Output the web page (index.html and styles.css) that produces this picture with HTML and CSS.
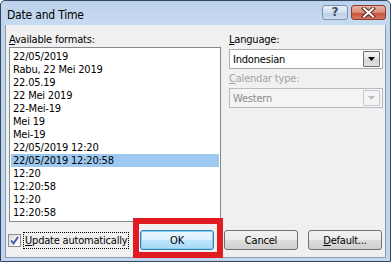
FILE: index.html
```html
<!DOCTYPE html>
<html>
<head>
<meta charset="utf-8">
<link rel="stylesheet" href="styles.css">
</head>
<body>
<div class="window">
  <div class="titlebar">
    <span class="title">Date and Time</span>
    <div class="caption-btns">
      <span class="cbtn help">?</span>
      <span class="cbtn close">
        <svg width="15" height="11" viewBox="0 0 15 11">
          <path d="M3 1.5 L12 9.5 M12 1.5 L3 9.5" stroke="#5a2a20" stroke-width="4" stroke-linecap="square"/>
          <path d="M3 1.5 L12 9.5 M12 1.5 L3 9.5" stroke="#ffffff" stroke-width="2" stroke-linecap="square"/>
        </svg>
      </span>
    </div>
  </div>
  <div class="client">
    <div class="main">
      <div class="col-left">
        <div class="label"><u>A</u>vailable formats:</div>
        <div class="listbox">
          <div class="item">22/05/2019</div>
          <div class="item">Rabu, 22 Mei 2019</div>
          <div class="item">22.05.19</div>
          <div class="item">22 Mei 2019</div>
          <div class="item">22-Mei-19</div>
          <div class="item">Mei 19</div>
          <div class="item">Mei-19</div>
          <div class="item">22/05/2019 12:20</div>
          <div class="item selected">22/05/2019 12:20:58</div>
          <div class="item">12:20</div>
          <div class="item">12:20:58</div>
          <div class="item">12:20</div>
          <div class="item">12:20:58</div>
        </div>
      </div>
      <div class="col-right">
        <div class="label"><u>L</u>anguage:</div>
        <div class="combo">
          <span class="combo-text">Indonesian</span>
          <span class="drop">
            <svg width="7" height="4" viewBox="0 0 7 4"><path d="M0 0 H7 L3.5 4 Z" fill="#000"/></svg>
          </span>
        </div>
        <div class="label label-cal disabled"><u>C</u>alendar type:</div>
        <div class="combo combo-disabled">
          <span class="combo-text">Western</span>
          <span class="drop">
            <svg width="7" height="4" viewBox="0 0 7 4"><path d="M0 0 H7 L3.5 4 Z" fill="#b8bcc2"/></svg>
          </span>
        </div>
      </div>
    </div>
    <div class="footer">
      <div class="check">
        <span class="box">
          <svg width="9" height="9" viewBox="0 0 9 9"><path d="M1 4.5 L3.5 7.5 L8 1" fill="none" stroke="#3d58a0" stroke-width="1.8"/></svg>
        </span>
        <span class="focus"><u>U</u>pdate automatically</span>
      </div>
      <span class="btn btn-ok">OK</span>
      <span class="btn">Cancel</span>
      <span class="btn"><u>D</u>efault...</span>
    </div>
  </div>
</div>
</body>
</html>
```

FILE: styles.css
```css
html, body {
  margin: 0;
  padding: 0;
  background: #ffffff;
}

body {
  font-family: "DejaVu Sans Condensed", "DejaVu Sans", "Liberation Sans", sans-serif;
  font-size: 11px;
  letter-spacing: -0.2px;
  color: #000;
}

u {
  text-decoration: underline;
  text-underline-offset: 1px;
}

.window {
  width: 391px;
  height: 262px;
  box-sizing: border-box;
  border: 1px solid #34465c;
  border-radius: 5px 5px 0 0;
  background: #c1d5ee;
  padding: 0 4px 3px 4px;
  display: flex;
  flex-direction: column;
}

.titlebar {
  height: 24px;
  display: flex;
  align-items: flex-start;
  justify-content: space-between;
  background: linear-gradient(#bcd1eb, #c8dbf1);
}

.title {
  margin: 7px 0 0 2px;
  font-size: 12px;
  line-height: 14px;
  color: #000;
}

.caption-btns {
  display: flex;
  gap: 3px;
  margin-top: 4px;
}

.cbtn {
  height: 15px;
  box-sizing: border-box;
  border-radius: 3px;
  display: flex;
  align-items: center;
  justify-content: center;
}

.help {
  width: 26px;
  border: 1px solid #7d92ae;
  background: linear-gradient(#e8eff8, #d2dfee 50%, #bccfe5 51%, #cddcee);
  color: #3a4c66;
  font-family: "DejaVu Sans", sans-serif;
  font-weight: bold;
  font-size: 12px;
  line-height: 13px;
}

.close {
  width: 35px;
  border: 1px solid #8c3a2b;
  background: linear-gradient(#eab2a3, #d98a77 50%, #c8513b 51%, #d8765e);
}

.client {
  flex: 1;
  background: #f0f0f0;
  border: 1px solid #8a9cb4;
  border-top: none;
  display: flex;
  flex-direction: column;
}

.main {
  display: flex;
  gap: 8px;
  padding: 8px 2px 0 3px;
}

.col-left {
  display: flex;
  flex-direction: column;
}

.label {
  height: 14px;
  line-height: 14px;
}

.listbox {
  width: 212px;
  height: 175px;
  box-sizing: border-box;
  border: 1px solid #828790;
  background: #fff;
  padding: 2px 1px 1px 1px;
}

.item {
  height: 13px;
  line-height: 13px;
  padding-left: 2px;
  white-space: nowrap;
}

.selected {
  background: #9dc9f0;
}

.col-right {
  display: flex;
  flex-direction: column;
  width: 154px;
}

.combo {
  margin-top: 2px;
  height: 20px;
  box-sizing: border-box;
  border: 1px solid #abadb3;
  background: #fff;
  display: flex;
  align-items: center;
  justify-content: space-between;
  padding: 0 2px 0 3px;
}

.drop {
  width: 17px;
  height: 16px;
  box-sizing: border-box;
  border: 1px solid #6f6f6f;
  border-radius: 1px;
  background: linear-gradient(#f4f4f4, #e6e6e6 50%, #d6d6d6 51%, #e0e0e0);
  display: flex;
  align-items: center;
  justify-content: center;
}

.label-cal {
  margin-top: 3px;
}

.disabled {
  color: #a3a3a3;
}

.combo-disabled {
  border-color: #b6bcc4;
  background: #f4f4f4;
  color: #8a8a8a;
}

.combo-disabled .drop {
  border-color: #c4c9d0;
  background: #f4f4f4;
}

.footer {
  margin-top: auto;
  display: flex;
  align-items: center;
  padding: 0 3px 7px 2px;
}

.check {
  display: flex;
  align-items: center;
  gap: 2px;
}

.box {
  width: 13px;
  height: 13px;
  box-sizing: border-box;
  border: 1px solid #8f8f8f;
  background: linear-gradient(135deg, #dcdcdc, #ffffff);
  display: flex;
  align-items: center;
  justify-content: center;
}

.focus {
  border: 1px dotted #000;
  padding: 1px;
  line-height: 13px;
}

.btn {
  width: 74px;
  height: 20px;
  box-sizing: border-box;
  border: 1px solid #707070;
  border-radius: 3px;
  background: linear-gradient(#f2f2f2, #ebebeb 50%, #dddddd 51%, #cfcfcf);
  display: flex;
  align-items: center;
  justify-content: center;
  margin-left: 10px;
}

.btn-ok {
  margin-left: auto;
  position: relative;
  border-color: #3c7fb1;
  background: linear-gradient(#eaf6fd, #d9f0fc 50%, #bee6fd 51%, #a7d9f5);
  box-shadow: inset 0 0 0 1px #7ed0f4;
}

.btn-ok::after {
  content: "";
  position: absolute;
  left: -8px;
  top: -13px;
  right: -10px;
  bottom: -9px;
  border: 6px solid #e11b22;
}
```
